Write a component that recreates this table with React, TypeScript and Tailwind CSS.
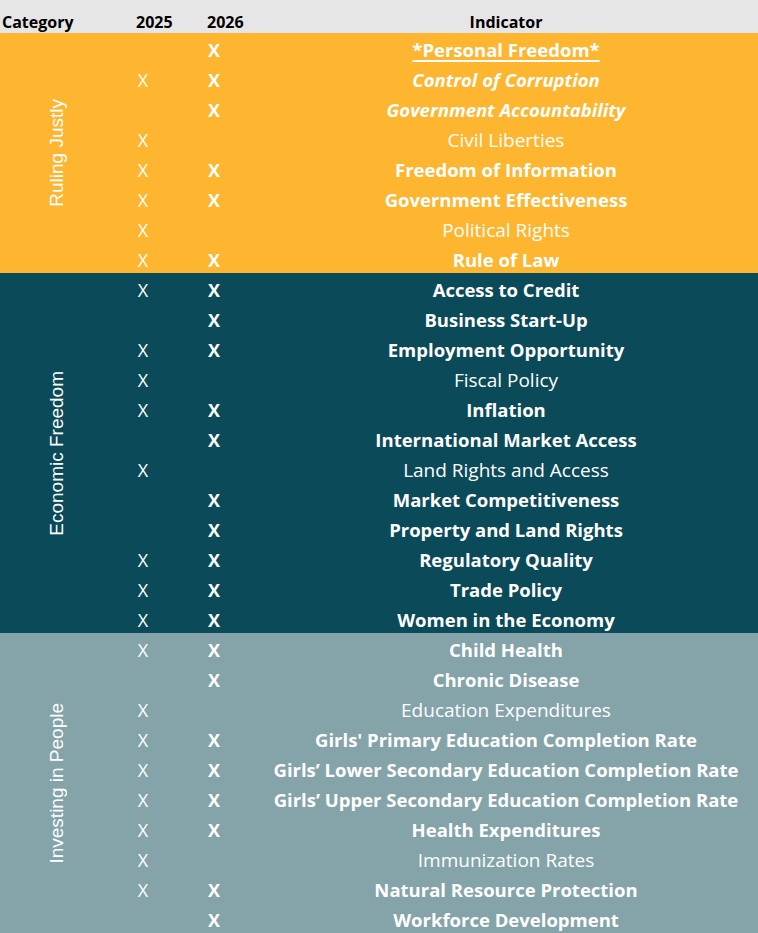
type Row = { a: boolean; b: boolean; name: string; style?: 'bold' | 'italic' | 'under' | 'plain' };

const sections: { label: string; bg: string; rows: Row[] }[] = [
  {
    label: 'Ruling Justly',
    bg: 'bg-[#feb52f]',
    rows: [
      { a: false, b: true, name: '*Personal Freedom*', style: 'under' },
      { a: true, b: true, name: 'Control of Corruption', style: 'italic' },
      { a: false, b: true, name: 'Government Accountability', style: 'italic' },
      { a: true, b: false, name: 'Civil Liberties', style: 'plain' },
      { a: true, b: true, name: 'Freedom of Information', style: 'bold' },
      { a: true, b: true, name: 'Government Effectiveness', style: 'bold' },
      { a: true, b: false, name: 'Political Rights', style: 'plain' },
      { a: true, b: true, name: 'Rule of Law', style: 'bold' },
    ],
  },
  {
    label: 'Economic Freedom',
    bg: 'bg-[#0b4a58]',
    rows: [
      { a: true, b: true, name: 'Access to Credit', style: 'bold' },
      { a: false, b: true, name: 'Business Start-Up', style: 'bold' },
      { a: true, b: true, name: 'Employment Opportunity', style: 'bold' },
      { a: true, b: false, name: 'Fiscal Policy', style: 'plain' },
      { a: true, b: true, name: 'Inflation', style: 'bold' },
      { a: false, b: true, name: 'International Market Access', style: 'bold' },
      { a: true, b: false, name: 'Land Rights and Access', style: 'plain' },
      { a: false, b: true, name: 'Market Competitiveness', style: 'bold' },
      { a: false, b: true, name: 'Property and Land Rights', style: 'bold' },
      { a: true, b: true, name: 'Regulatory Quality', style: 'bold' },
      { a: true, b: true, name: 'Trade Policy', style: 'bold' },
      { a: true, b: true, name: 'Women in the Economy', style: 'bold' },
    ],
  },
  {
    label: 'Investing in People',
    bg: 'bg-[#84a4aa]',
    rows: [
      { a: true, b: true, name: 'Child Health', style: 'bold' },
      { a: false, b: true, name: 'Chronic Disease', style: 'bold' },
      { a: true, b: false, name: 'Education Expenditures', style: 'plain' },
      { a: true, b: true, name: "Girls' Primary Education Completion Rate", style: 'bold' },
      { a: true, b: true, name: 'Girls’ Lower Secondary Education Completion Rate', style: 'bold' },
      { a: true, b: true, name: 'Girls’ Upper Secondary Education Completion Rate', style: 'bold' },
      { a: true, b: true, name: 'Health Expenditures', style: 'bold' },
      { a: true, b: false, name: 'Immunization Rates', style: 'plain' },
      { a: true, b: true, name: 'Natural Resource Protection', style: 'bold' },
      { a: false, b: true, name: 'Workforce Development', style: 'bold' },
    ],
  },
];

const nameClass = {
  bold: 'font-bold text-[18.5px]',
  italic: 'font-bold italic text-[18.5px]',
  under: 'font-bold text-[18.5px] underline underline-offset-[3px] decoration-[1.5px]',
  plain: 'font-normal text-[19px]',
};

export default function App() {
  return (
    <div className="w-[758px] h-[933px] overflow-hidden bg-white font-['Open_Sans',sans-serif] text-white">
      {/* Header */}
      <div className="h-[33px] bg-[#e7e6e6] flex items-end pb-[3px] text-black font-bold text-[16px] leading-none">
        <div className="w-[136px] pl-[2px]">Category</div>
        <div className="w-[71px]">2025</div>
        <div className="w-[47px]">2026</div>
        <div className="flex-1 text-center">Indicator</div>
      </div>

      {sections.map((s) => (
        <div key={s.label} className={`flex ${s.bg}`}>
          <div className="w-[112px] flex items-center justify-center">
            <span className="[writing-mode:vertical-rl] rotate-180 font-['Liberation_Sans',sans-serif] text-[19px] leading-none">
              {s.label}
            </span>
          </div>
          <div className="flex-1">
            {s.rows.map((r) => (
              <div key={r.name} className="h-[30px] flex items-center pt-[4px] text-[18px] leading-none">
                <div className="w-[62px] text-center">{r.a ? 'X' : ''}</div>
                <div className="w-[80px] text-center font-bold">{r.b ? 'X' : ''}</div>
                <div className={`flex-1 text-center whitespace-nowrap ${nameClass[r.style ?? 'bold']}`}>{r.name}</div>
              </div>
            ))}
          </div>
        </div>
      ))}
    </div>
  );
}
